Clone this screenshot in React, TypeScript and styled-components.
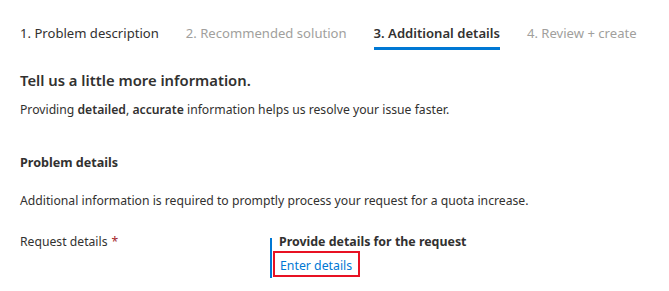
import React from "react";
import styled, { createGlobalStyle } from "styled-components";

const GlobalStyle = createGlobalStyle`
  body {
    margin: 0;
    background: #ffffff;
    font-family: "Noto Sans", "Open Sans", sans-serif;
    color: #323130;
  }
`;

const Page = styled.div`
  padding: 0 20px;
  width: 669px;
  box-sizing: border-box;
`;

const TabBar = styled.div`
  display: flex;
  gap: 27px;
  padding-top: 23px;
`;

const Tab = styled.div<{ $active?: boolean; $disabled?: boolean }>`
  font-size: 13.1px;
  line-height: 20px;
  white-space: nowrap;
  padding-bottom: 4px;
  border-bottom: 3px solid ${(p) => (p.$active ? "#0078d4" : "transparent")};
  color: ${(p) => (p.$disabled ? "#a19f9d" : "#323130")};
  font-weight: ${(p) => (p.$active ? 600 : 400)};
`;

const Heading = styled.h2`
  margin: 20px 0 0;
  font-size: 14.8px;
  line-height: 20px;
  font-weight: 600;
`;

const Text = styled.p`
  margin: 0;
  font-size: 12.2px;
  line-height: 18px;
`;

const Intro = styled(Text)`
  margin-top: 11px;
`;

const Strong = styled.span`
  font-weight: 600;
`;

const SectionTitle = styled.h3`
  margin: 35px 0 0;
  font-size: 12.6px;
  line-height: 18px;
  font-weight: 700;
`;

const Notice = styled(Text)`
  margin-top: 20px;
`;

const FieldRow = styled.div`
  display: flex;
  margin-top: 28px;
`;

const Label = styled.div`
  width: 250px;
  flex-shrink: 0;
  font-size: 12.2px;
  line-height: 18px;
  margin-top: -5px;
`;

const Required = styled.span`
  color: #a4262c;
  margin-left: 4px;
`;

const Value = styled.div`
  border-left: 2px solid #0078d4;
  padding-left: 7px;
  display: flex;
  flex-direction: column;
  align-items: flex-start;
  padding-bottom: 1px;
`;

const ValueTitle = styled.div`
  font-size: 12.4px;
  line-height: 18px;
  font-weight: 700;
  margin-top: -5px;
`;

const Highlight = styled.div`
  border: 2px solid #e81123;
  margin-left: -6px;
  padding: 0 6px 0 5px;
`;

const Link = styled.a`
  font-size: 12.3px;
  line-height: 18px;
  color: #0078d4;
  text-decoration: none;
`;

export default function App() {
  return (
    <>
      <GlobalStyle />
      <Page>
        <TabBar>
          <Tab>1. Problem description</Tab>
          <Tab $disabled>2. Recommended solution</Tab>
          <Tab $active>3. Additional details</Tab>
          <Tab $disabled>4. Review + create</Tab>
        </TabBar>
        <Heading>Tell us a little more information.</Heading>
        <Intro>
          Providing <Strong>detailed</Strong>, <Strong>accurate</Strong> information helps us resolve your issue faster.
        </Intro>
        <SectionTitle>Problem details</SectionTitle>
        <Notice>Additional information is required to promptly process your request for a quota increase.</Notice>
        <FieldRow>
          <Label>
            Request details<Required>*</Required>
          </Label>
          <Value>
            <ValueTitle>Provide details for the request</ValueTitle>
            <Highlight>
              <Link href="#">Enter details</Link>
            </Highlight>
          </Value>
        </FieldRow>
      </Page>
    </>
  );
}
